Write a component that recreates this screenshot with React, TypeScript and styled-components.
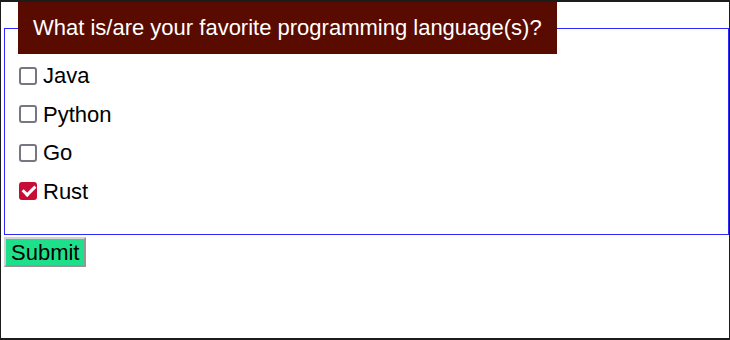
import React, { useState } from "react";
import styled, { createGlobalStyle } from "styled-components";

const GlobalStyle = createGlobalStyle`
  html, body {
    margin: 0;
    padding: 0;
    background: #ffffff;
  }
  body {
    font-family: "Liberation Sans", Arial, sans-serif;
  }
`;

const Frame = styled.div`
  box-sizing: border-box;
  width: 730px;
  height: 340px;
  border: 2px solid #1c1c1c;
  border-left-width: 1px;
  border-right-width: 1px;
  background: #ffffff;
`;

const Form = styled.form`
  display: flex;
  flex-direction: column;
  align-items: flex-start;
`;

const Fieldset = styled.fieldset`
  align-self: stretch;
  margin: 0 0 0 3px;
  padding: 0 0 0 13px;
  border: 1px solid #2a2aff;
  min-width: 0;
`;

const Legend = styled.legend`
  background: #5a0b00;
  color: #ffffff;
  font-size: 22px;
  line-height: 25px;
  padding: 13px 15px 14px 15px;
  margin: 0;
`;

const Options = styled.div`
  display: flex;
  flex-direction: column;
  gap: 13.5px;
  padding: 9px 0 30px;
`;

const Option = styled.label`
  display: flex;
  align-items: center;
  gap: 6px;
  font-size: 22px;
  line-height: 25px;
  color: #000000;
`;

const Check = styled.input`
  appearance: none;
  box-sizing: border-box;
  position: relative;
  width: 18px;
  height: 18px;
  margin: 0 0 0 1px;
  border: 2px solid #777784;
  border-radius: 3px;
  background: #ffffff;

  &:checked {
    background: #c80c38;
    border-color: #c80c38;
  }

  &:checked::after {
    content: "";
    position: absolute;
    left: 4px;
    top: -1px;
    width: 5px;
    height: 10px;
    border: solid #ffffff;
    border-width: 0 3px 3px 0;
    transform: rotate(45deg);
  }
`;

const SubmitButton = styled.button`
  margin: 2px 0 0 3px;
  padding: 1px 5px 0;
  font-family: "Liberation Sans", Arial, sans-serif;
  font-size: 22px;
  line-height: 25px;
  color: #000000;
  background: #1ee08a;
  border: 2px solid;
  border-color: #d4d0d4 #9a949a #9a949a #d4d0d4;
`;

const languages = ["Java", "Python", "Go", "Rust"];

export default function App() {
  const [picked, setPicked] = useState<string[]>(["Rust"]);

  const toggle = (lang: string) =>
    setPicked((cur) =>
      cur.includes(lang) ? cur.filter((l) => l !== lang) : [...cur, lang]
    );

  return (
    <>
      <GlobalStyle />
      <Frame>
        <Form onSubmit={(e) => e.preventDefault()}>
          <Fieldset>
            <Legend>What is/are your favorite programming language(s)?</Legend>
            <Options>
              {languages.map((lang) => (
                <Option key={lang}>
                  <Check
                    type="checkbox"
                    checked={picked.includes(lang)}
                    onChange={() => toggle(lang)}
                  />
                  {lang}
                </Option>
              ))}
            </Options>
          </Fieldset>
          <SubmitButton type="submit">Submit</SubmitButton>
        </Form>
      </Frame>
    </>
  );
}
